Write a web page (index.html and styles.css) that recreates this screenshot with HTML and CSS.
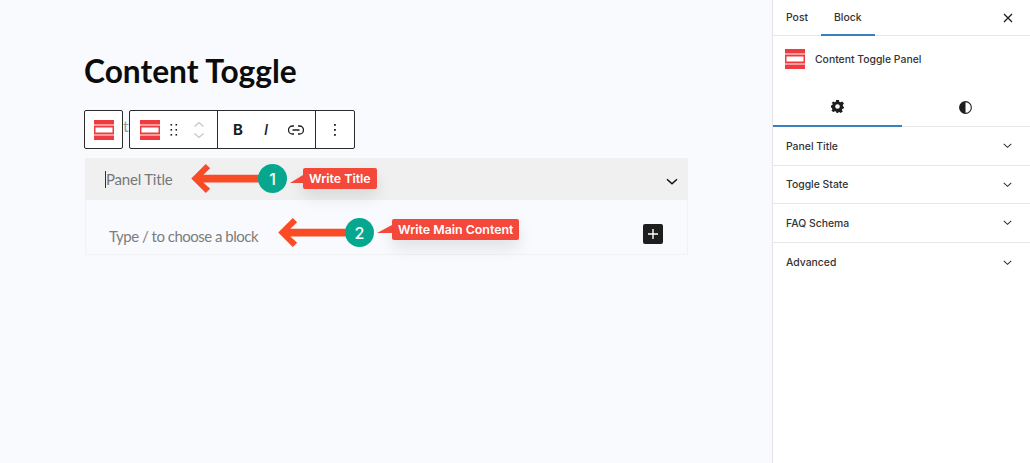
FILE: index.html
```html
<!DOCTYPE html>
<html lang="en">
<head>
    <meta charset="UTF-8">
    <title>Content Toggle</title>
    <link rel="stylesheet" href="styles.css">
</head>
<body>
    <svg class="defs" width="0" height="0">
        <symbol id="panel-icon" viewBox="0 0 20 20">
            <rect x="0" y="0" width="20" height="4.5" fill="#ef3b3f"/>
            <rect x="0" y="5.5" width="20" height="9" fill="#ef3b3f"/>
            <rect x="1.5" y="7.5" width="17" height="5" fill="#fff"/>
            <rect x="0" y="15.5" width="20" height="4.5" fill="#ef3b3f"/>
        </symbol>
        <symbol id="chevron" viewBox="0 0 12 8">
            <path d="M1 1.2l5 4.6 5-4.6" fill="none" stroke="currentColor" stroke-width="1.5"/>
        </symbol>
    </svg>

    <main class="editor">
        <h1 class="post-title">Content Toggle</h1>

        <div class="toolbar-row">
            <div class="toolbar toolbar-parent">
                <svg class="panel-icon"><use href="#panel-icon"/></svg>
            </div>
            <span class="hidden-letter">t</span>
            <div class="toolbar toolbar-main">
                <div class="tool-group group-block">
                    <svg class="panel-icon"><use href="#panel-icon"/></svg>
                    <svg class="drag" viewBox="0 0 10 14" width="10" height="14">
                        <g fill="#1e1e1e">
                            <rect x="1.500" y="1" width="1.600" height="1.600"/><rect x="6.500" y="1" width="1.600" height="1.600"/>
                            <rect x="1.500" y="6" width="1.600" height="1.600"/><rect x="6.500" y="6" width="1.600" height="1.600"/>
                            <rect x="1.500" y="11" width="1.600" height="1.600"/><rect x="6.500" y="11" width="1.600" height="1.600"/>
                        </g>
                    </svg>
                    <svg class="movers" viewBox="0 0 12 20" width="12" height="20">
                        <path d="M1.500 6.500L6 2.500l4.500 4M1.500 13.500l4.500 4 4.500-4" fill="none" stroke="#c6c6c6" stroke-width="1.200"/>
                    </svg>
                </div>
                <div class="tool-group group-format">
                    <span class="tool-bold">B</span>
                    <span class="tool-italic">I</span>
                    <svg class="link" viewBox="0 0 16 10" width="16" height="10">
                        <path d="M6 1H4.500a4 4 0 0 0 0 8H6M10 1h1.500a4 4 0 0 1 0 8H10M4.500 5h7" fill="none" stroke="#1e1e1e" stroke-width="1.300"/>
                    </svg>
                </div>
                <div class="tool-group group-more">
                    <svg viewBox="0 0 4 14" width="4" height="14">
                        <g fill="#1e1e1e">
                            <rect x="1" y="1" width="1.800" height="1.800"/><rect x="1" y="6" width="1.800" height="1.800"/><rect x="1" y="11" width="1.800" height="1.800"/>
                        </g>
                    </svg>
                </div>
            </div>
        </div>

        <section class="toggle-panel">
            <div class="panel-head">
                <span class="caret"></span>
                <span class="panel-title">Panel Title</span>
                <svg class="head-chevron"><use href="#chevron"/></svg>
            </div>
            <div class="panel-body">
                <span class="placeholder">Type / to choose a block</span>
                <span class="add-block">
                    <svg viewBox="0 0 12 12" width="12" height="12">
                        <path d="M6 1v10M1 6h10" stroke="#fff" stroke-width="1.400"/>
                    </svg>
                </span>
            </div>
        </section>

        <!-- annotations on top of the screenshot -->
        <div class="note note-one">
            <svg class="arrow" viewBox="0 0 80 32" width="80" height="31">
                <path d="M0 16L15 1l4.500 4.500-7 6.500H80v8H12.500l7 6.500L15 31z" fill="#f94c26"/>
            </svg>
            <span class="badge">1</span>
            <span class="tag"><span class="tag-tail"></span>Write Title</span>
        </div>
        <div class="note note-two">
            <svg class="arrow" viewBox="0 0 80 32" width="80" height="31">
                <path d="M0 16L15 1l4.500 4.500-7 6.500H80v8H12.500l7 6.500L15 31z" fill="#f94c26"/>
            </svg>
            <span class="badge">2</span>
            <span class="tag"><span class="tag-tail"></span>Write Main Content</span>
        </div>
    </main>

    <aside class="sidebar">
        <div class="side-tabs">
            <span class="side-tab">Post</span>
            <span class="side-tab active">Block</span>
            <svg class="close" viewBox="0 0 10 10" width="10" height="10">
                <path d="M1 1l8 8M9 1l-8 8" stroke="#1e1e1e" stroke-width="1.300"/>
            </svg>
        </div>
        <div class="block-card">
            <svg class="card-icon"><use href="#panel-icon"/></svg>
            <span class="card-name">Content Toggle Panel</span>
        </div>
        <div class="icon-tabs">
            <div class="icon-tab active">
                <svg viewBox="0 0 14 14" width="13" height="13">
                    <path fill-rule="evenodd" fill="#1e1e1e" d="M5.500 0h3l.4 1.900 1.300.6L12 1.500l2 2.300-1.300 1.500.3 1.700 1 .5v1.500l-1.900.6-.4 1.300 1 1.600-2.300 1.500-1.500-1-1.400.4L8 14H6l-.5-1.600-1.400-.4-1.500 1-2.100-1.500 1-1.600-.5-1.300L0 8V6l1.500-.7.300-1.500L.6 3.300 2.500 1.500l1.500 1 1.200-.6zM7 4.500a2.500 2.500 0 1 0 0 5 2.500 2.500 0 0 0 0-5z"/>
                </svg>
            </div>
            <div class="icon-tab">
                <svg viewBox="0 0 14 14" width="13" height="13">
                    <circle cx="7" cy="7" r="6.300" fill="none" stroke="#1e1e1e" stroke-width="1.200"/>
                    <path d="M7 .7a6.300 6.300 0 0 0 0 12.600z" fill="#1e1e1e"/>
                </svg>
            </div>
        </div>
        <div class="side-row"><span>Panel Title</span><svg class="row-chevron"><use href="#chevron"/></svg></div>
        <div class="side-row"><span>Toggle State</span><svg class="row-chevron"><use href="#chevron"/></svg></div>
        <div class="side-row"><span>FAQ Schema</span><svg class="row-chevron"><use href="#chevron"/></svg></div>
        <div class="side-row"><span>Advanced</span><svg class="row-chevron"><use href="#chevron"/></svg></div>
    </aside>
</body>
</html>
```

FILE: styles.css
```css
html, body {
    height: 100%;
}

body {
    margin: 0;
    display: flex;
    overflow: hidden;
    background-color: #fff;
    font-family: Inter, "Liberation Sans", sans-serif;
    color: #1e1e1e;
}

.defs {
    position: absolute;
}

/* Editor side */
.editor {
    position: relative;
    flex: 0 0 772px;
    box-sizing: border-box;
    padding: 52px 84px 0;
    background-color: #f9fafd;
}

.post-title {
    margin: 0;
    font-family: Lato, sans-serif;
    font-size: 31.7px;
    line-height: 39px;
    font-weight: 700;
    color: #0c0c0c;
}

.toolbar-row {
    display: flex;
    margin-top: 19px;
}

.toolbar {
    display: flex;
    height: 39px;
    box-sizing: border-box;
    background-color: #fff;
    border: 1px solid #2b2b2b;
    border-radius: 2px;
}

.toolbar-parent {
    width: 39px;
    align-items: center;
    justify-content: center;
}

.toolbar-main {
    width: 226px;
}

.hidden-letter {
    width: 6px;
    padding-top: 6px;
    overflow: hidden;
    font-family: Lato, sans-serif;
    font-size: 16px;
    color: #999;
}

.panel-icon {
    width: 20px;
    height: 20px;
}

.tool-group {
    display: flex;
    align-items: center;
    border-right: 1px solid #2b2b2b;
}

.tool-group:last-child {
    border-right: 0;
}

.group-block {
    width: 88px;
    box-sizing: border-box;
    padding-left: 10px;
}

.drag {
    margin-left: 9px;
}

.movers {
    margin-left: 14px;
}

.group-format {
    width: 98px;
    box-sizing: border-box;
    padding-left: 15px;
}

.tool-bold {
    width: 13px;
    font-size: 15px;
    font-weight: 700;
}

.tool-italic {
    width: 10px;
    margin-left: 18px;
    font-size: 15px;
    font-weight: 500;
    font-style: italic;
}

.link {
    margin-left: 14px;
}

.group-more {
    flex: 1;
    justify-content: center;
}

.toggle-panel {
    width: 603px;
    margin: 9px 0 0 1px;
}

.panel-head {
    display: flex;
    align-items: center;
    height: 42px;
    padding: 0 10px 0 20px;
    background-color: #f0f0f0;
}

.caret {
    width: 1px;
    height: 17px;
    background-color: #333;
}

.panel-title {
    flex: 1;
    font-family: Lato, sans-serif;
    font-size: 15px;
    letter-spacing: -0.2px;
    color: #777;
}

.head-chevron {
    width: 12px;
    height: 8px;
    margin-top: 5px;
    color: #111;
}

.panel-body {
    display: flex;
    align-items: flex-end;
    justify-content: space-between;
    height: 55px;
    box-sizing: border-box;
    padding: 0 24px 10px 23px;
    border: 1px solid #f1f2f4;
    border-top: 0;
}

.placeholder {
    margin-bottom: -2px;
    font-family: Lato, sans-serif;
    font-size: 15px;
    letter-spacing: -0.5px;
    line-height: 20px;
    color: #7d7d7d;
}

.add-block {
    display: flex;
    align-items: center;
    justify-content: center;
    width: 20px;
    height: 20px;
    border-radius: 2px;
    background-color: #1e1e1e;
}

/* Annotations */
.note {
    position: absolute;
    display: flex;
    align-items: center;
}

.note-one {
    left: 190px;
    top: 163px;
}

.note-two {
    left: 277px;
    top: 217px;
}

.arrow {
    display: block;
}

.badge {
    display: flex;
    align-items: center;
    justify-content: center;
    width: 29px;
    height: 29px;
    margin-left: -12px;
    border-radius: 50%;
    background-color: #05a88e;
    color: #fff;
    font-size: 16px;
    font-weight: 500;
}

.tag {
    position: relative;
    margin-left: 16px;
    padding: 0 6px;
    height: 21px;
    line-height: 21px;
    border-radius: 2px;
    background-color: #f4483a;
    color: #fff;
    font-size: 12.4px;
    font-weight: 600;
    white-space: nowrap;
    box-shadow: 0 8px 16px rgba(0, 0, 0, 0.1);
}

.note-two .tag {
    margin-left: 18px;
    margin-bottom: 6px;
}

.tag-tail {
    position: absolute;
    left: -13px;
    top: 7px;
    border-style: solid;
    border-width: 8px 13px 0 0;
    border-color: transparent #f4483a transparent transparent;
}

.note-two .tag-tail {
    left: -15px;
    top: 6px;
    border-width: 8px 15px 0 0;
}

/* Settings sidebar */
.sidebar {
    flex: 1;
    box-sizing: border-box;
    border-left: 1px solid #e4e4e4;
    background-color: #fff;
}

.side-tabs {
    display: flex;
    align-items: center;
    height: 36px;
    box-sizing: border-box;
    padding-left: 1px;
    border-bottom: 1px solid #e6e6e6;
}

.side-tab {
    display: flex;
    align-items: center;
    height: 36px;
    box-sizing: border-box;
    padding: 0 12px;
    font-size: 10.4px;
    font-weight: 500;
    color: #333;
}

.side-tab.active {
    margin-left: 1px;
    padding: 2px 13px 0;
    border-bottom: 2px solid #3a80c0;
}

.close {
    margin-left: auto;
    margin-right: 17px;
}

.block-card {
    display: flex;
    align-items: center;
    gap: 10px;
    height: 46px;
    padding-left: 12px;
}

.card-icon {
    width: 20px;
    height: 20px;
}

.card-name {
    font-size: 10.4px;
    font-weight: 500;
    color: #333;
}

.icon-tabs {
    display: flex;
    height: 44px;
    border-bottom: 1px solid #e6e6e6;
}

.icon-tab {
    display: flex;
    align-items: center;
    justify-content: center;
    flex: 1;
    box-sizing: border-box;
    padding-top: 6px;
}

.icon-tab.active {
    border-bottom: 2px solid #3a80c0;
    margin-bottom: -1px;
}

.side-row {
    display: flex;
    align-items: center;
    justify-content: space-between;
    height: 38.67px;
    box-sizing: border-box;
    padding: 0.5px 18px 0 13px;
    border-bottom: 1px solid #e6e6e6;
    font-size: 10.4px;
    font-weight: 500;
    color: #333;
}

.side-row:last-child {
    border-bottom: 0;
}

.row-chevron {
    width: 9px;
    height: 6px;
    color: #333;
}
```
